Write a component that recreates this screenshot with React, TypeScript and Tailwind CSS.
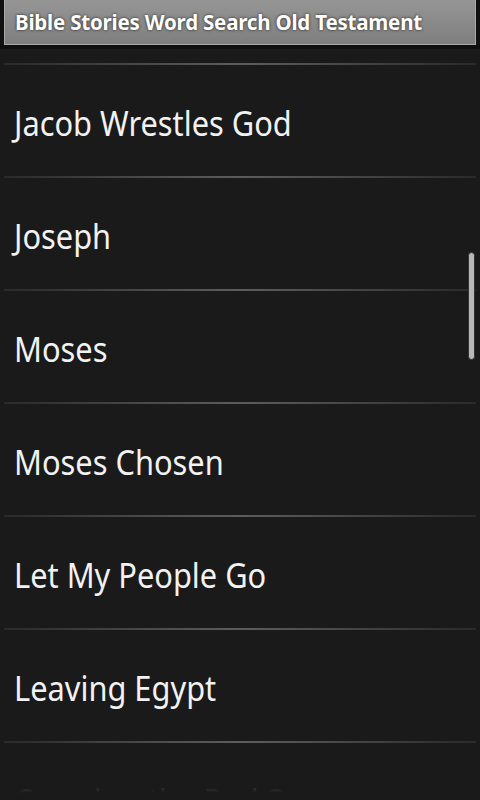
import React from "react";

const stories = [
  "Jacob Wrestles God",
  "Joseph",
  "Moses",
  "Moses Chosen",
  "Let My People Go",
  "Leaving Egypt",
  "Crossing the Red Sea",
];

function Divider() {
  return (
    <div className="mx-[4px] h-[2px] bg-[linear-gradient(90deg,#2a2a2a_0%,#4a4a4a_30%,#5c5c5c_50%,#4a4a4a_70%,#2a2a2a_100%)]" />
  );
}

export default function App() {
  return (
    <div
      className="relative h-[800px] w-[480px] overflow-hidden bg-[#1a1a1a]"
      style={{ fontFamily: '"Noto Sans", "Open Sans", sans-serif' }}
    >
      {/* title bar */}
      <div className="bg-[#111111] px-[4px]">
        <div className="flex h-[45px] items-center border-x border-b border-[#a8a8a8] bg-[linear-gradient(180deg,#969696_0%,#8a8a8a_50%,#7e7e7e_100%)] pl-[10px]">
          <span className="text-[20.5px] font-bold tracking-[-0.2px] text-white [text-shadow:0_0_3px_rgba(0,0,0,0.8)]">
            Bible Stories Word Search Old Testament
          </span>
        </div>
      </div>
      <div className="h-[4px] bg-[#0e0e0e]" />

      {/* story list */}
      <div className="pt-[14px]">
        <Divider />
        {stories.map((s) => (
          <div key={s}>
            <div className="flex h-[111px] items-center pl-[14px] pt-[4px] text-[35px] leading-none text-[#f2f2f2]">
              <span className="inline-block origin-left scale-x-[0.88] whitespace-nowrap">{s}</span>
            </div>
            <Divider />
          </div>
        ))}
      </div>

      {/* list fading edge */}
      <div className="pointer-events-none absolute bottom-0 left-0 h-[34px] w-full bg-[linear-gradient(180deg,rgba(26,26,26,0)_0%,rgba(26,26,26,0.85)_55%,#1a1a1a_80%)]" />

      {/* scroll indicator */}
      <div className="absolute left-[468px] top-[252px] h-[108px] w-[7px] rounded-full border border-[#333] bg-[#b8b8b8]" />
    </div>
  );
}
